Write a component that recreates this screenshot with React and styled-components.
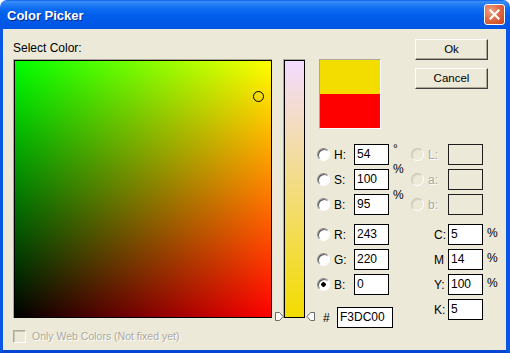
import React from 'react'
import styled, { createGlobalStyle } from 'styled-components'

const color = { r: 243, g: 220, b: 0 }

const GlobalStyle = createGlobalStyle`
  html, body {
    margin: 0;
    padding: 0;
    background: #fff;
  }
  body {
    font-family: "Liberation Sans", Arial, sans-serif;
    font-size: 12px;
    color: #000;
  }
`

export default function App() {
  const { r, g, b } = color
  const sliderTop = 30 + 2 + (255 - b) - 4

  return (
    <>
      <GlobalStyle />
      <Window>
        <TitleBar>
          <Title>Color Picker</Title>
          <CloseButton>
            <svg width="11" height="11" viewBox="0 0 11 11">
              <path d="M1.5 1.5 L9.5 9.5 M9.5 1.5 L1.5 9.5" stroke="#fff" strokeWidth="2.2" strokeLinecap="square" />
            </svg>
          </CloseButton>
        </TitleBar>
        <Client>
          <LeftCol>
            <Caption>Select Color:</Caption>
            <Sunken>
              <Plane>
                <Marker style={{ left: r - 5, top: 255 - g - 5 }} />
              </Plane>
            </Sunken>
            <CheckRow>
              <CheckBox />
              <DimText>Only Web Colors (Not fixed yet)</DimText>
            </CheckRow>
          </LeftCol>

          <SliderCol>
            <Sunken>
              <Track $top={`rgb(${r},${g},255)`} $bottom={`rgb(${r},${g},0)`} />
            </Sunken>
            <Arrow $side="left" style={{ top: sliderTop }}>
              <svg width="9" height="9" viewBox="0 0 9 9">
                <path d="M0.5 0.5 H4.5 L8 4.5 L4.5 8.5 H0.5 Z" fill="#fff" stroke="#6b6b6b" />
              </svg>
            </Arrow>
            <Arrow $side="right" style={{ top: sliderTop }}>
              <svg width="9" height="9" viewBox="0 0 9 9">
                <path d="M8.5 0.5 H4.5 L1 4.5 L4.5 8.5 H8.5 Z" fill="#fff" stroke="#6b6b6b" />
              </svg>
            </Arrow>
          </SliderCol>

          <Panel>
            <TopRow>
              <Swatch>
                <SwatchHalf $color="#F3DC00" />
                <SwatchHalf $color="#FF0000" />
              </Swatch>
              <ButtonCol>
                <Button>Ok</Button>
                <Button>Cancel</Button>
              </ButtonCol>
            </TopRow>

            <HsbGrid>
              <Radio />
              <Label>H:</Label>
              <Input>54</Input>
              <Unit $offset={-1}>°</Unit>
              <Radio $disabled />
              <Label $disabled>L:</Label>
              <Box />

              <Radio />
              <Label>S:</Label>
              <Input>100</Input>
              <Unit $offset={-6}>%</Unit>
              <Radio $disabled />
              <Label $disabled>a:</Label>
              <Box />

              <Radio />
              <Label>B:</Label>
              <Input>95</Input>
              <Unit $offset={-5}>%</Unit>
              <Radio $disabled />
              <Label $disabled>b:</Label>
              <Box />
            </HsbGrid>

            <LowerRow>
              <RgbCol>
                <RgbGrid>
                  <Radio />
                  <Label>R:</Label>
                  <Input>243</Input>
                  <Radio />
                  <Label>G:</Label>
                  <Input>220</Input>
                  <Radio $checked />
                  <Label>B:</Label>
                  <Input>0</Input>
                </RgbGrid>
                <HexRow>
                  <Hash>#</Hash>
                  <Input $wide>F3DC00</Input>
                </HexRow>
              </RgbCol>

              <CmykGrid>
                <CmykLabel>C:</CmykLabel>
                <Input>5</Input>
                <Unit $offset={3}>%</Unit>
                <CmykLabel>M</CmykLabel>
                <Input>14</Input>
                <Unit $offset={3}>%</Unit>
                <CmykLabel>Y:</CmykLabel>
                <Input>100</Input>
                <Unit $offset={3}>%</Unit>
                <CmykLabel>K:</CmykLabel>
                <Input>5</Input>
                <span />
              </CmykGrid>
            </LowerRow>
          </Panel>
        </Client>
      </Window>
    </>
  )
}

const Window = styled.div`
  width: 510px;
  height: 353px;
  display: flex;
  flex-direction: column;
  overflow: hidden;
`

const TitleBar = styled.div`
  height: 29px;
  flex: 0 0 29px;
  display: flex;
  align-items: center;
  justify-content: space-between;
  padding: 0 5px 0 7px;
  box-sizing: border-box;
  border-radius: 7px 7px 0 0;
  background: linear-gradient(
    to bottom,
    #0a5ee8 0%,
    #3d8ff9 6%,
    #2a82f7 12%,
    #0d6cf2 30%,
    #0360ec 50%,
    #0058e6 75%,
    #0055e3 100%
  );
`

const Title = styled.span`
  font-family: "Liberation Sans", Arial, sans-serif;
  font-weight: bold;
  font-size: 13px;
  color: #fff;
  text-shadow: 1px 1px 0 #0a2a8c;
  padding-top: 2px;
`

const CloseButton = styled.div`
  width: 21px;
  height: 21px;
  box-sizing: border-box;
  border: 1px solid #fff;
  border-radius: 3px;
  display: flex;
  align-items: center;
  justify-content: center;
  background: radial-gradient(circle at 30% 30%, #f0a286 0%, #e16b45 45%, #c8431b 100%);
`

const Client = styled.div`
  flex: 1;
  display: flex;
  background: #ece9d8;
  border-left: 3px solid #0856e4;
  border-right: 4px solid #0856e4;
  border-bottom: 3px solid #0446d4;
`

const LeftCol = styled.div`
  margin-left: 10px;
  width: 259px;
  padding-top: 12px;
  display: flex;
  flex-direction: column;
`

const Caption = styled.div`
  font-size: 12px;
  line-height: 14px;
  height: 14px;
  margin-bottom: 4px;
`

const Sunken = styled.div`
  width: fit-content;
  border-top: 1px solid #aca899;
  border-left: 1px solid #aca899;
`

const Plane = styled.div`
  position: relative;
  width: 256px;
  height: 256px;
  border: 1px solid #000;
  background:
    linear-gradient(to bottom, #00ff00, #000000),
    linear-gradient(to right, #000000, #ff0000);
  background-blend-mode: screen;
`

const Marker = styled.div`
  position: absolute;
  width: 11px;
  height: 11px;
  box-sizing: border-box;
  border: 1px solid #000;
  border-radius: 50%;
`

const CheckRow = styled.div`
  margin-top: 12px;
  display: flex;
  align-items: center;
  gap: 6px;
`

const CheckBox = styled.div`
  width: 13px;
  height: 13px;
  box-sizing: border-box;
  border: 1px solid;
  border-color: #aca899 #fff #fff #aca899;
  box-shadow: inset 1px 1px 0 #cbc7b8;
`

const DimText = styled.span`
  font-size: 10.5px;
  line-height: 13px;
  color: #aca899;
  text-shadow: 1px 1px 0 #fff;
`

const SliderCol = styled.div`
  position: relative;
  margin-left: 3px;
  width: 39px;
  padding: 30px 0 0 8px;
  box-sizing: border-box;
`

const Track = styled.div`
  width: 19px;
  height: 256px;
  border: 1px solid #000;
  background: linear-gradient(to bottom, ${(p) => p.$top}, ${(p) => p.$bottom});
`

const Arrow = styled.div`
  position: absolute;
  width: 9px;
  height: 9px;
  ${(p) => (p.$side === 'left' ? 'left: 0;' : 'left: 31px;')}
  svg {
    display: block;
  }
`

const Panel = styled.div`
  flex: 1;
  padding: 10px 0 0 3px;
  display: flex;
  flex-direction: column;
`

const TopRow = styled.div`
  display: flex;
  align-items: flex-start;
  margin-left: -3px;
`

const Swatch = styled.div`
  margin: 20px 0 0 5px;
  display: flex;
  flex-direction: column;
  border: 1px solid;
  border-color: #aca899 #fff #fff #aca899;
`

const SwatchHalf = styled.div`
  width: 60px;
  height: 34px;
  background: ${(p) => p.$color};
`

const ButtonCol = styled.div`
  margin-left: 34px;
  display: flex;
  flex-direction: column;
  gap: 8px;
`

const Button = styled.div`
  width: 73px;
  height: 21px;
  box-sizing: border-box;
  display: flex;
  align-items: center;
  justify-content: center;
  padding-bottom: 2px;
  font-size: 11.5px;
  border: 1px solid;
  border-color: #fff #404040 #404040 #fff;
  box-shadow: inset -1px -1px 0 #aca899;
  background: #ece9d8;
`

const HsbGrid = styled.div`
  margin-top: 15px;
  display: grid;
  grid-template-columns: 13px 24px 35px 22px 13px 24px 35px;
  grid-auto-rows: 21px;
  row-gap: 4px;
  align-items: center;
`

const Radio = styled.div`
  width: 13px;
  height: 13px;
  box-sizing: border-box;
  border-radius: 50%;
  border: 1px solid;
  border-color: ${(p) => (p.$disabled ? '#c9c6b6 #fff #fff #c9c6b6' : '#8d8d8d #fff #fff #8d8d8d')};
  box-shadow: ${(p) => (p.$disabled ? 'inset 1px 1px 0 #d8d5c6' : 'inset 1px 1px 0 #555')};
  background: ${(p) =>
    p.$disabled
      ? '#ece9d8'
      : p.$checked
        ? 'radial-gradient(circle, #000 0 2px, #fff 2.5px)'
        : '#fff'};
`

const Label = styled.div`
  padding-left: 4px;
  font-size: 12px;
  color: ${(p) => (p.$disabled ? '#aca899' : '#000')};
  text-shadow: ${(p) => (p.$disabled ? '1px 1px 0 #fff' : 'none')};
`

const Input = styled.div`
  flex-shrink: 0;
  width: ${(p) => (p.$wide ? '56px' : '35px')};
  height: 21px;
  box-sizing: border-box;
  border: 1px solid #000;
  background: #fff;
  padding: 0 0 0 2px;
  font-size: 12px;
  line-height: 19px;
`

const Box = styled.div`
  width: 35px;
  height: 21px;
  box-sizing: border-box;
  border: 1px solid #1e1e1e;
  background: #ece9d8;
`

const Unit = styled.div`
  align-self: start;
  margin-top: ${(p) => p.$offset}px;
  padding-left: 4px;
  font-size: 12px;
  line-height: 12px;
`

const LowerRow = styled.div`
  margin-top: 9px;
  display: flex;
  align-items: flex-start;
`

const RgbCol = styled.div`
  width: 72px;
  display: flex;
  flex-direction: column;
`

const RgbGrid = styled.div`
  display: grid;
  grid-template-columns: 13px 24px 35px;
  grid-auto-rows: 21px;
  row-gap: 4px;
  align-items: center;
`

const HexRow = styled.div`
  margin-top: 12px;
  padding-left: 6px;
  display: flex;
  align-items: center;
  gap: 7px;
`

const Hash = styled.span`
  flex-shrink: 0;
  font-size: 12px;
  width: 7px;
`

const CmykGrid = styled.div`
  margin-left: 35px;
  display: grid;
  grid-template-columns: 24px 35px 20px;
  grid-auto-rows: 21px;
  row-gap: 4px;
  align-items: center;
`

const CmykLabel = styled.div`
  padding-left: 10px;
  font-size: 12px;
`
